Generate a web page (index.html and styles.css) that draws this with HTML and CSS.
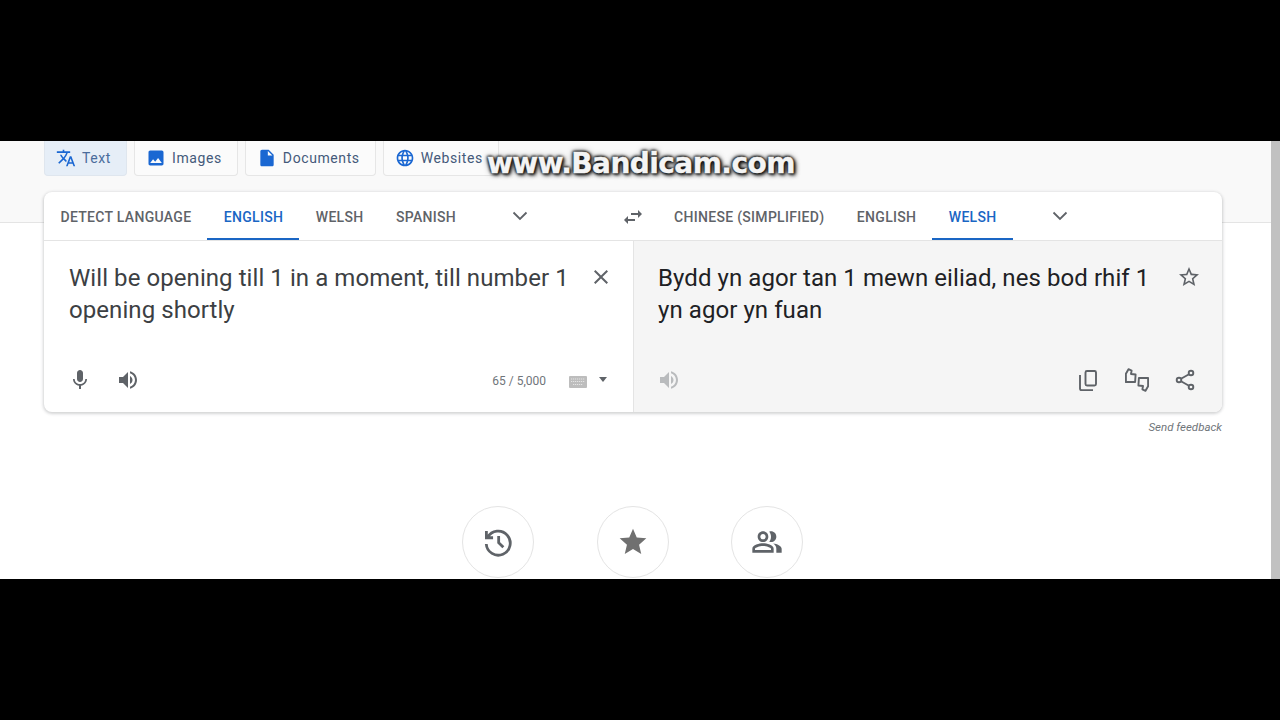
FILE: index.html
```html
<!DOCTYPE html>
<html lang="en">
<head>
<meta charset="utf-8">
<title>Translate</title>
<link rel="stylesheet" href="styles.css">
</head>
<body>
<div class="letterbox"></div>
<div class="viewport">
  <main class="main">
    <div class="band">
      <nav class="modes">
        <a class="mode mode-active"><svg class="i20 blue" viewBox="0 0 24 24"><path d="M12.87 15.07l-2.54-2.51.03-.03c1.74-1.94 2.98-4.17 3.71-6.53H17V4h-7V2H8v2H1v1.99h11.17C11.5 7.92 10.44 9.75 9 11.35 8.07 10.32 7.3 9.19 6.69 8h-2c.73 1.63 1.73 3.17 2.98 4.56l-5.09 5.02L4 19l5-5 3.11 3.11.76-2.04zM18.5 10h-2L12 22h2l1.12-3h4.75L21 22h2l-4.5-12zm-2.62 7l1.62-4.33L19.12 17h-3.24z"/></svg>Text</a>
        <a class="mode"><svg class="i20 blue" viewBox="0 0 24 24"><path d="M21 19V5c0-1.1-.9-2-2-2H5c-1.1 0-2 .9-2 2v14c0 1.1.9 2 2 2h14c1.1 0 2-.9 2-2zM8.5 13.5l2.5 3.01L14.5 12l4.5 6H5l3.5-4.5z"/></svg>Images</a>
        <a class="mode"><svg class="i20 blue" viewBox="0 0 24 24"><path d="M6 2c-1.1 0-1.99.9-1.99 2L4 20c0 1.1.89 2 1.99 2H18c1.1 0 2-.9 2-2V8l-6-6H6zm7 7V3.5L18.5 9H13z"/></svg>Documents</a>
        <a class="mode"><svg class="i20 blue" viewBox="0 0 24 24"><path d="M11.99 2C6.47 2 2 6.48 2 12s4.47 10 9.99 10C17.52 22 22 17.52 22 12S17.52 2 11.99 2zm6.93 6h-2.95c-.32-1.25-.78-2.45-1.38-3.56 1.84.63 3.37 1.91 4.33 3.56zM12 4.04c.83 1.2 1.48 2.53 1.91 3.96h-3.82c.43-1.43 1.08-2.76 1.91-3.96zM4.26 14C4.1 13.36 4 12.69 4 12s.1-1.36.26-2h3.38c-.08.66-.14 1.32-.14 2 0 .68.06 1.34.14 2H4.26zm.82 2h2.95c.32 1.25.78 2.45 1.38 3.56-1.84-.63-3.37-1.9-4.33-3.56zm2.95-8H5.08c.96-1.66 2.49-2.93 4.33-3.56C8.81 5.55 8.35 6.75 8.03 8zM12 19.96c-.83-1.2-1.48-2.53-1.91-3.96h3.82c-.43 1.43-1.08 2.76-1.91 3.96zM14.34 14H9.66c-.09-.66-.16-1.32-.16-2 0-.68.07-1.35.16-2h4.68c.09.65.16 1.32.16 2 0 .68-.07 1.34-.16 2zm.25 5.56c.6-1.11 1.06-2.31 1.38-3.56h2.95c-.96 1.65-2.49 2.93-4.33 3.56zM16.36 14c.08-.66.14-1.32.14-2 0-.68-.06-1.34-.14-2h3.38c.16.64.26 1.31.26 2s-.1 1.36-.26 2h-3.38z"/></svg>Websites</a>
      </nav>
    </div>
    <section class="card">
      <header class="langs">
        <div class="lang-group">
          <span class="lang">Detect language</span>
          <span class="lang lang-active">English</span>
          <span class="lang">Welsh</span>
          <span class="lang">Spanish</span>
          <svg class="chevron chevron-left" viewBox="0 0 24 24"><path d="M5.5 8.5L12 15l6.5-6.5"/></svg>
        </div>
        <div class="swap"><svg class="i24 gray" viewBox="0 0 24 24"><path d="M6.99 11L3 15l3.99 4v-3H14v-2H6.99v-3zM21 9l-3.99-4v3H10v2h7.01v3L21 9z"/></svg></div>
        <div class="lang-group lang-group-target">
          <span class="lang">Chinese (Simplified)</span>
          <span class="lang">English</span>
          <span class="lang lang-active">Welsh</span>
          <svg class="chevron chevron-right" viewBox="0 0 24 24"><path d="M5.5 8.5L12 15l6.5-6.5"/></svg>
        </div>
      </header>
      <div class="panels">
        <div class="panel panel-source">
          <div class="panel-top">
            <p class="source-text">Will be opening till 1 in a moment, till number 1 opening shortly</p>
            <svg class="i24 gray top-icon" viewBox="0 0 24 24"><path d="M19 6.41L17.59 5 12 10.59 6.41 5 5 6.41 10.59 12 5 17.59 6.41 19 12 13.41 17.59 19 19 17.59 13.41 12z"/></svg>
          </div>
          <div class="panel-foot">
            <svg class="i24 gray" viewBox="0 0 24 24"><path d="M12 14c1.66 0 2.99-1.34 2.99-3L15 5c0-1.66-1.34-3-3-3S9 3.34 9 5v6c0 1.66 1.34 3 3 3zm5.3-3c0 3-2.54 5.1-5.3 5.1S6.7 14 6.7 11H5c0 3.41 2.72 6.23 6 6.72V21h2v-3.28c3.28-.48 6-3.3 6-6.72h-1.7z"/></svg>
            <svg class="i24 gray" viewBox="0 0 24 24"><path d="M3 9v6h4l5 5V4L7 9H3zm13.5 3c0-1.77-1.02-3.29-2.5-4.03v8.05c1.48-.73 2.5-2.25 2.5-4.02zM14 3.23v2.06c2.89.86 5 3.54 5 6.71s-2.11 5.85-5 6.71v2.06c4.01-.91 7-4.49 7-8.77s-2.99-7.86-7-8.77z"/></svg>
            <span class="count">65 / 5,000</span>
            <svg class="keyboard" viewBox="0 0 18 12"><rect width="18" height="12" rx="1" fill="#bdbdbd"/><path d="M2 3h14M2 5.5h14M4 8.500h10" stroke="#e4e4e4" stroke-width="1.200" stroke-dasharray="1.200 .8"/></svg>
            <span class="caret"></span>
          </div>
        </div>
        <div class="panel panel-target">
          <div class="panel-top">
            <p class="target-text">Bydd yn agor tan 1 mewn eiliad, nes bod rhif 1 yn agor yn fuan</p>
            <svg class="i24 gray top-icon" viewBox="0 0 24 24"><path d="M22 9.24l-7.19-.62L12 2 9.19 8.63 2 9.24l5.46 4.73L5.82 21 12 17.27 18.18 21l-1.63-7.03L22 9.24zM12 15.4l-3.76 2.27 1-4.28-3.32-2.88 4.38-.38L12 6.1l1.71 4.04 4.38.38-3.32 2.88 1 4.28L12 15.4z"/></svg>
          </div>
          <div class="panel-foot panel-foot-target">
            <svg class="i24 faded" viewBox="0 0 24 24"><path d="M3 9v6h4l5 5V4L7 9H3zm13.5 3c0-1.77-1.02-3.29-2.5-4.03v8.05c1.48-.73 2.5-2.25 2.5-4.02zM14 3.23v2.06c2.89.86 5 3.54 5 6.71s-2.11 5.85-5 6.71v2.06c4.01-.91 7-4.49 7-8.77s-2.99-7.86-7-8.77z"/></svg>
            <div class="target-actions">
              <svg class="i24 line" viewBox="0 0 24 24"><rect x="9.500" y="3" width="10.500" height="14.500" rx="1.500"/><path d="M4 7v13.500c0 1 .7 1.600 1.600 1.600H17"/></svg>
              <svg class="i24 line" viewBox="0 0 24 24"><path d="M.9 5.800L3.500 1.200 6.600 2.700 6 6l4.600.500-.5 7.500H.9zM23.100 18.200L20.500 22.800 17.400 21.300 18 18l-4.600-.5.5-7.500h9.200z"/></svg>
              <svg class="i24 line" viewBox="0 0 24 24"><circle cx="18" cy="5" r="2.300"/><circle cx="6" cy="12" r="2.300"/><circle cx="18" cy="19" r="2.300"/><path d="M8 10.800l8-4.600M8 13.200l8 4.600"/></svg>
            </div>
          </div>
        </div>
      </div>
    </section>
    <div class="feedback-row"><span class="feedback">Send feedback</span></div>
    <div class="shortcuts">
      <span class="shortcut"><svg class="i32 line-heavy" viewBox="0 0 24 24"><path d="M3.300 3.800v5h5M4.300 8.500A9 9 0 1 1 3.200 13.500M12.500 7.500v5l3.500 3.500"/></svg></span>
      <span class="shortcut"><svg class="i32 star-fill" viewBox="0 0 24 24"><path d="M12 17.270L18.180 21l-1.640-7.030L22 9.240l-7.190-.61L12 2 9.190 8.630 2 9.240l5.460 4.730L5.820 21z"/></svg></span>
      <span class="shortcut"><svg class="i32 gray" viewBox="0 0 24 24"><path d="M16.670 13.130C18.040 14.060 19 15.320 19 17v3h4v-3c0-2.180-3.570-3.470-6.330-3.870zM15 12c2.210 0 4-1.790 4-4s-1.790-4-4-4c-.47 0-.91.100-1.330.240C14.500 5.270 15 6.580 15 8s-.5 2.730-1.330 3.760c.42.140.86.240 1.330.240zM9 12c2.210 0 4-1.790 4-4s-1.790-4-4-4-4 1.790-4 4 1.790 4 4 4zm0-6c1.100 0 2 .9 2 2s-.9 2-2 2-2-.9-2-2 .9-2 2-2zM9 13c-2.670 0-8 1.340-8 4v3h16v-3c0-2.660-5.330-4-8-4zm6 5H3v-.99C3.200 16.290 6.300 15 9 15s5.800 1.290 6 2v1z"/></svg></span>
    </div>
  </main>
  <div class="scrollbar"></div>
  <div class="watermark">www.Bandicam.com</div>
</div>
<div class="letterbox"></div>
</body>
</html>
```

FILE: styles.css
```css
* { box-sizing: border-box; }
html, body { margin: 0; height: 720px; overflow: hidden; background: #000; }
body { font-family: Roboto, "Liberation Sans", sans-serif; display: flex; flex-direction: column; }
.letterbox { flex: 0 0 141px; background: #000; }
.viewport { flex: 0 0 438px; display: flex; position: relative; overflow: hidden; background: #fff; }
.main { flex: 1; min-width: 0; overflow: hidden; }
.scrollbar { flex: 0 0 9px; background: #c1c1c1; }

.band { height: 82px; background: #f9f9f9; border-bottom: 1px solid #e4e4e4; padding-left: 44px; }
.modes { display: flex; gap: 7px; }
.mode { display: flex; align-items: center; gap: 6px; height: 35px; padding: 0 15px 0 11px; font-size: 14px; letter-spacing: .6px; color: #44597a; background: #fbfbfb; border: 1px solid #e6e6e6; border-top: 0; border-radius: 0 0 4px 4px; }
.mode-active { color: #4a6c9c; background: #e6eef7; border-color: #dfe6ee; }

.i20 { width: 20px; height: 20px; flex: none; }
.i24 { width: 24px; height: 24px; flex: none; }
.i32 { width: 32px; height: 32px; flex: none; }
.blue { fill: #1a67d2; }
.gray { fill: #5f6368; }
.faded { fill: #b9bbbd; }
.star-fill { fill: #707070; }
.line { fill: none; stroke: #5f6368; stroke-width: 1.900; stroke-linejoin: round; }
.line-heavy { fill: none; stroke: #5f6368; stroke-width: 2.100; }

.card { position: relative; width: 1178px; margin: -31px 0 0 44px; background: #fff; border-radius: 8px; box-shadow: 0 1px 3px 1px rgba(60,64,67,.22); overflow: hidden; }
.langs { display: grid; grid-template-columns: 1fr 48px 1fr; height: 49px; border-bottom: 1px solid #e4e4e4; }
.lang-group { display: flex; align-items: stretch; min-width: 0; }
.lang-group-target { padding-left: .5px; }
.lang { display: flex; align-items: center; padding: 1px 16px 0 16.500px; height: 48px; font-size: 14px; font-weight: 500; text-transform: uppercase; letter-spacing: .3px; color: #5f6368; white-space: nowrap; }
.lang-active { color: #1a66c4; box-shadow: inset 0 -2px 0 #1a66c4; }
.chevron { width: 24px; height: 24px; align-self: center; fill: none; stroke: #5f6368; stroke-width: 1.800; }
.chevron-left { margin-left: 36px; }
.chevron-right { margin-left: 35px; }
.swap { display: flex; align-items: center; justify-content: center; padding-top: 1px; }

.panels { display: grid; grid-template-columns: 590px 1fr; height: 171px; }
.panel { display: flex; flex-direction: column; justify-content: space-between; min-width: 0; }
.panel-source { border-right: 1px solid #e4e4e4; }
.panel-target { background: #f5f5f5; }
.panel-top { display: flex; align-items: flex-start; justify-content: space-between; padding: 21px 20px 0 25px; }
.panel-target .panel-top { padding: 21px 21px 0 24px; }
.source-text, .target-text { margin: 0; font-size: 24px; line-height: 32px; letter-spacing: .07px; width: 510px; }
.source-text { color: #3c4043; }
.target-text { color: #202124; width: 505px; }
.top-icon { margin-top: 3px; }

.panel-foot { display: flex; align-items: center; gap: 24px; height: 48px; margin-bottom: 8px; padding: 0 26px 0 24px; }
.panel-foot-target { padding: 0 25px 0 23px; }
.count { margin-left: auto; margin-right: -1px; margin-top: 2px; font-size: 12px; color: #70757a; }
.keyboard { width: 18px; height: 12px; margin-top: 4px; }
.caret { width: 0; height: 0; margin: -1px 0 0 -12px; border: 4.500px solid transparent; border-top: 5px solid #5f6368; border-bottom: 0; }
.target-actions { margin-left: auto; display: flex; gap: 24.500px; }

.feedback-row { width: 1178px; margin-left: 44px; display: flex; justify-content: flex-end; padding-top: 8px; }
.feedback { font-size: 11.500px; line-height: 14px; font-style: italic; color: #70757a; }

.shortcuts { width: 1177px; margin: 72px 0 0 44px; display: flex; justify-content: center; gap: 62.500px; }
.shortcut { width: 72px; height: 72px; border: 1px solid #e4e4e4; border-radius: 50%; display: flex; align-items: center; justify-content: center; }

.watermark { position: absolute; left: 487px; top: 6px; font-family: "DejaVu Sans", sans-serif; font-weight: 700; font-size: 28px; line-height: 34px; letter-spacing: -.55px; color: #f4f4f4; -webkit-text-stroke: .4px #f4f4f4; white-space: nowrap; text-shadow: 0 0 3px #111, 1px 1px 3px #111, 2px 2px 4px #222, -1px -1px 3px #333, 0 0 6px #555; }
```
